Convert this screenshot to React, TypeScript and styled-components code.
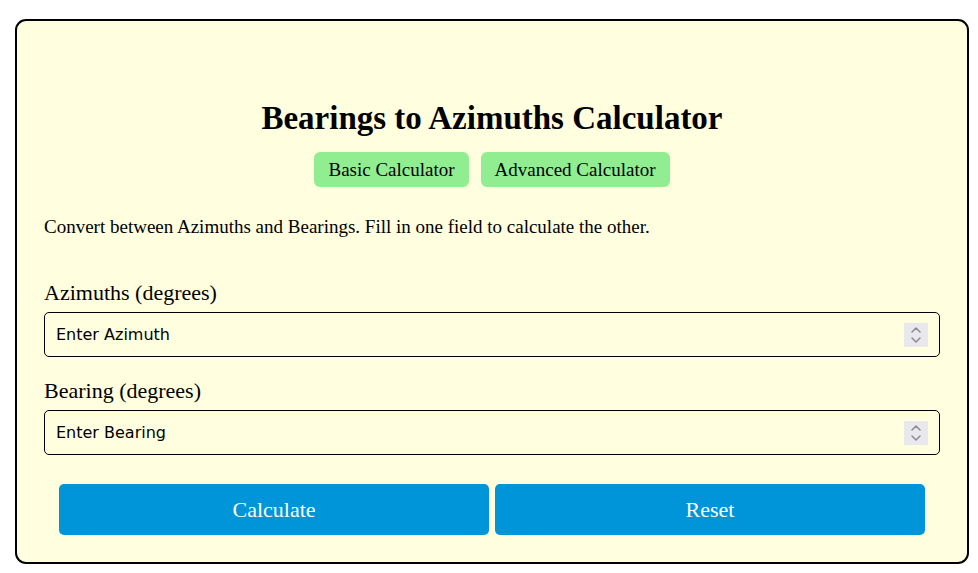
import { FC, useState } from "react";
import styled, { createGlobalStyle } from "styled-components";

const GlobalStyle = createGlobalStyle`
  body {
    margin: 0;
    background: #ffffff;
    font-family: "Liberation Serif", "Times New Roman", serif;
  }
`;

const Page = styled.div`
  padding: 19px 9px 8px 15px;
`;

const Card = styled.div`
  box-sizing: border-box;
  height: 545px;
  background: #ffffe0;
  border: 2px solid #000;
  border-radius: 11px;
  padding: 0 27px;
  display: flex;
  flex-direction: column;
`;

const Title = styled.h1`
  margin: 78px 0 0;
  font-size: 33px;
  line-height: 38px;
  font-weight: bold;
  text-align: center;
  color: #000;
`;

const ModeRow = styled.div`
  display: flex;
  justify-content: center;
  gap: 12px;
  margin-top: 15px;
`;

const ModeButton = styled.button`
  height: 35px;
  padding: 0 14px;
  border: none;
  border-radius: 6px;
  background: #90ee90;
  font-family: "Liberation Serif", "Times New Roman", serif;
  font-size: 19px;
  color: #000;
  cursor: pointer;
`;

const Description = styled.p`
  margin: 29px 0 0;
  font-size: 19px;
  line-height: 22px;
`;

const Fields = styled.div`
  display: flex;
  flex-direction: column;
  gap: 22px;
  margin-top: 43px;
`;

const Field = styled.div`
  display: flex;
  flex-direction: column;
  gap: 7px;
`;

const Label = styled.label`
  font-size: 22px;
  line-height: 24px;
  color: #000;
`;

const InputWrap = styled.div`
  position: relative;
`;

const Input = styled.input`
  box-sizing: border-box;
  width: 100%;
  height: 45px;
  padding: 0 11px;
  border: 1px solid #000;
  border-radius: 5px;
  background: transparent;
  font-family: "DejaVu Sans", Verdana, sans-serif;
  font-size: 16px;
  color: #000;
  outline: none;
  -moz-appearance: textfield;

  &::placeholder {
    color: #000;
  }

  &::-webkit-outer-spin-button,
  &::-webkit-inner-spin-button {
    -webkit-appearance: none;
    margin: 0;
  }
`;

const Spinner = styled.span`
  position: absolute;
  right: 12px;
  top: 11px;
  width: 24px;
  height: 24px;
  background: #e9e9ed;
  display: flex;
  align-items: center;
  justify-content: center;
  pointer-events: none;
`;

const ActionRow = styled.div`
  display: flex;
  gap: 6px;
  padding: 0 15px;
  margin-top: 29px;
`;

const ActionButton = styled.button`
  flex: 1;
  height: 51px;
  border: none;
  border-radius: 5px;
  background: #0094d9;
  color: #fff;
  font-family: "Liberation Serif", "Times New Roman", serif;
  font-size: 22px;
  cursor: pointer;
`;

const SpinIcon: FC = () => (
  <svg width="12" height="20" viewBox="0 0 12 20" fill="none">
    <path d="M2 7 L6 3 L10 7" stroke="#8a8a93" strokeWidth="1.5" strokeLinecap="round" strokeLinejoin="round" />
    <path d="M2 13 L6 17 L10 13" stroke="#8a8a93" strokeWidth="1.5" strokeLinecap="round" strokeLinejoin="round" />
  </svg>
);

const App: FC = () => {
  const [azimuth, setAzimuth] = useState("");
  const [bearing, setBearing] = useState("");

  return (
    <Page>
      <GlobalStyle />
      <Card>
        <Title>Bearings to Azimuths Calculator</Title>
        <ModeRow>
          <ModeButton>Basic Calculator</ModeButton>
          <ModeButton>Advanced Calculator</ModeButton>
        </ModeRow>
        <Description>
          Convert between Azimuths and Bearings. Fill in one field to calculate the other.
        </Description>
        <Fields>
          <Field>
            <Label htmlFor="azimuth">Azimuths (degrees)</Label>
            <InputWrap>
              <Input
                id="azimuth"
                type="number"
                placeholder="Enter Azimuth"
                value={azimuth}
                onChange={(e) => setAzimuth(e.target.value)}
              />
              <Spinner>
                <SpinIcon />
              </Spinner>
            </InputWrap>
          </Field>
          <Field>
            <Label htmlFor="bearing">Bearing (degrees)</Label>
            <InputWrap>
              <Input
                id="bearing"
                type="number"
                placeholder="Enter Bearing"
                value={bearing}
                onChange={(e) => setBearing(e.target.value)}
              />
              <Spinner>
                <SpinIcon />
              </Spinner>
            </InputWrap>
          </Field>
        </Fields>
        <ActionRow>
          <ActionButton>Calculate</ActionButton>
          <ActionButton
            onClick={() => {
              setAzimuth("");
              setBearing("");
            }}
          >
            Reset
          </ActionButton>
        </ActionRow>
      </Card>
    </Page>
  );
};

export default App;
